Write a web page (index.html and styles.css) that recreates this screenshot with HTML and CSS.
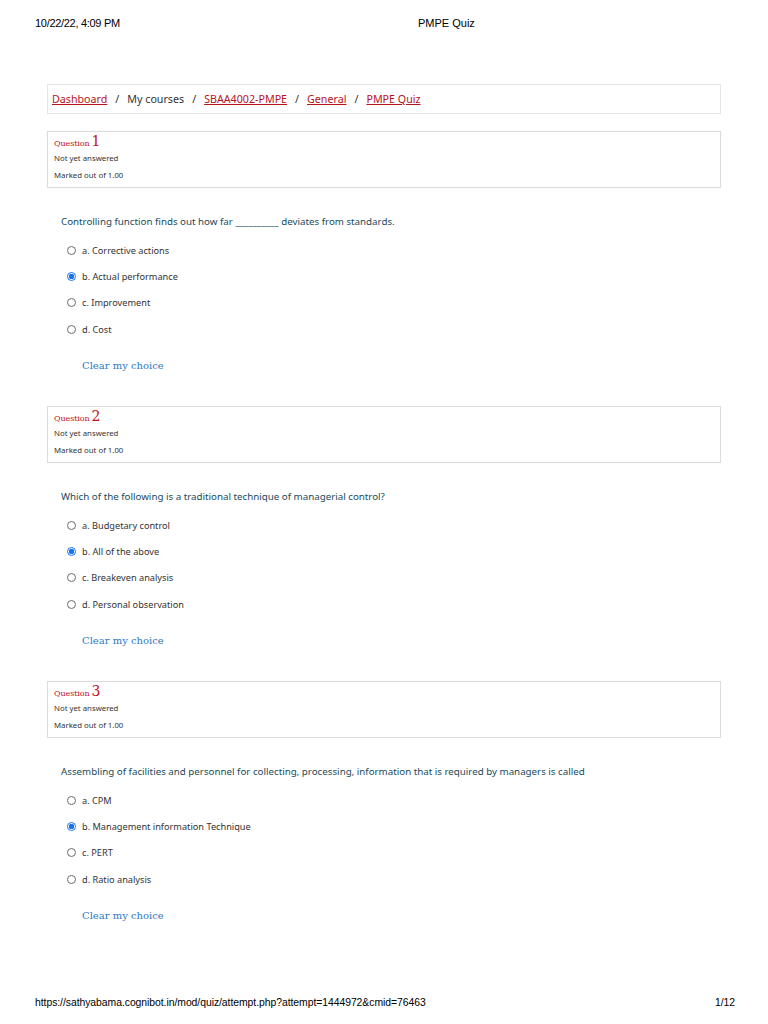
FILE: index.html
```html
<!DOCTYPE html>
<html lang="en">

<head>
    <meta charset="UTF-8">
    <title>PMPE Quiz</title>
    <link rel="stylesheet" href="styles.css">
</head>

<body>
    <header class="printhead">
        <span class="dato">10/22/22, 4:09 PM</span>
        <span class="titel">PMPE Quiz</span>
    </header>

    <main class="side">
        <nav class="brodkrumme">
            <a href="#">Dashboard</a>
            <span class="skil">/</span>
            <span>My courses</span>
            <span class="skil">/</span>
            <a href="#">SBAA4002-PMPE</a>
            <span class="skil">/</span>
            <a href="#">General</a>
            <span class="skil">/</span>
            <a href="#">PMPE Quiz</a>
        </nav>

        <section class="spm">
            <div class="info">
                <p class="nr">Question<span>1</span></p>
                <p class="status">Not yet answered</p>
                <p class="status">Marked out of 1.00</p>
            </div>
            <p class="tekst">Controlling function finds out how far __________ deviates from standards.</p>
            <div class="svar">
                <label><input type="radio" name="q1"> a. Corrective actions</label>
                <label><input type="radio" name="q1" checked> b. Actual performance</label>
                <label><input type="radio" name="q1"> c. Improvement</label>
                <label><input type="radio" name="q1"> d. Cost</label>
            </div>
            <a class="ryd" href="#">Clear my choice</a>
        </section>

        <section class="spm">
            <div class="info">
                <p class="nr">Question<span>2</span></p>
                <p class="status">Not yet answered</p>
                <p class="status">Marked out of 1.00</p>
            </div>
            <p class="tekst">Which of the following is a traditional technique of managerial control?</p>
            <div class="svar">
                <label><input type="radio" name="q2"> a. Budgetary control</label>
                <label><input type="radio" name="q2" checked> b. All of the above</label>
                <label><input type="radio" name="q2"> c. Breakeven analysis</label>
                <label><input type="radio" name="q2"> d. Personal observation</label>
            </div>
            <a class="ryd" href="#">Clear my choice</a>
        </section>

        <section class="spm">
            <div class="info">
                <p class="nr">Question<span>3</span></p>
                <p class="status">Not yet answered</p>
                <p class="status">Marked out of 1.00</p>
            </div>
            <p class="tekst">Assembling of facilities and personnel for collecting, processing, information that is required by managers is called</p>
            <div class="svar">
                <label><input type="radio" name="q3"> a. CPM</label>
                <label><input type="radio" name="q3" checked> b. Management information Technique</label>
                <label><input type="radio" name="q3"> c. PERT</label>
                <label><input type="radio" name="q3"> d. Ratio analysis</label>
            </div>
            <a class="ryd" href="#">Clear my choice</a>
        </section>
    </main>

    <footer class="printfod">
        <span>https://sathyabama.cognibot.in/mod/quiz/attempt.php?attempt=1444972&amp;cmid=76463</span>
        <span>1/12</span>
    </footer>
</body>

</html>
```

FILE: styles.css
```css
body {
    margin: 0;
    width: 768px;
    height: 1024px;
    background: #fff;
    font-family: "Noto Sans", "Open Sans", sans-serif;
    color: #333;
}

p {
    margin: 0;
}

.printhead {
    display: flex;
    padding: 16px 35px 0;
    height: 14px;
    font-family: "Liberation Sans", Arial, sans-serif;
    font-size: 11px;
    line-height: 14px;
    letter-spacing: -0.3px;
    color: #000;
}

.printhead .dato {
    width: 383px;
}

.printhead .titel {
    letter-spacing: 0;
}

.side {
    margin: 54px 47px 0;
}

.brodkrumme {
    display: flex;
    align-items: center;
    gap: 8px;
    height: 28px;
    padding-left: 4px;
    border: 1px solid #e6e6e6;
    font-size: 10.7px;
    color: #333;
    margin-bottom: 17px;
}

.brodkrumme a {
    color: #b8121b;
}

.spm {
    height: 275px;
}

.info {
    border: 1px solid #dcdcdc;
    box-shadow: 0 0 1px #eee;
    padding: 4px 6px 3px;
}

.nr {
    height: 14px;
    font-family: "DejaVu Serif", serif;
    font-size: 8px;
    line-height: 14px;
    color: #c0101a;
    letter-spacing: -0.1px;
}

.nr span {
    margin-left: 2px;
    font-size: 14px;
    line-height: 10px;
}

.status {
    font-size: 7.8px;
    line-height: 17px;
}

.tekst {
    margin: 26px 0 7px 14px;
    font-size: 9.75px;
    line-height: 16px;
    color: #1a4b5c;
}

.svar label {
    display: flex;
    align-items: center;
    gap: 6px;
    height: 26.4px;
    padding-left: 20px;
    font-size: 9.2px;
}

.svar input {
    appearance: none;
    margin: 0;
    width: 9px;
    height: 9px;
    border: 1px solid #6d6d6d;
    border-radius: 50%;
}

.svar input:checked {
    border-color: #1a73e8;
    background: radial-gradient(circle, #1a73e8 0 2.5px, #fff 3px);
}

.ryd {
    display: block;
    margin: 15px 0 0 35px;
    font-family: "DejaVu Serif", serif;
    font-size: 10px;
    line-height: 16px;
    color: #2b79c6;
    text-decoration: none;
}

.printfod {
    display: flex;
    justify-content: space-between;
    margin-top: 40px;
    padding: 0 33px 0 35px;
    font-family: "Liberation Sans", Arial, sans-serif;
    font-size: 10.4px;
    line-height: 14px;
    letter-spacing: -0.05px;
    color: #000;
}
```
